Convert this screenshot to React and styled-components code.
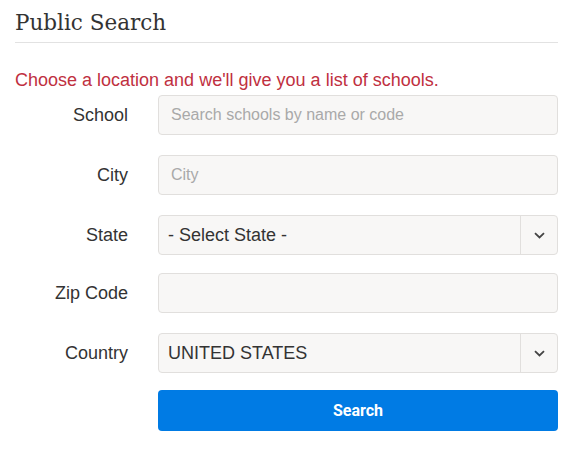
import React from "react";
import styled, { createGlobalStyle } from "styled-components";

const Global = createGlobalStyle`
  html, body { margin: 0; padding: 0; background: #fff; }
  body { font-family: "Liberation Sans", Arial, sans-serif; color: #333; }
  * { box-sizing: border-box; }
`;

const Page = styled.div`
  width: 583px;
  padding: 8px 25px 0 15px;
`;

const Title = styled.h1`
  margin: 0;
  font-family: "DejaVu Serif", "Liberation Serif", serif;
  font-weight: normal;
  font-size: 21.5px;
  line-height: 30px;
  color: #333;
  padding-bottom: 4px;
  border-bottom: 1px solid #e2e2e2;
`;

const Intro = styled.p`
  margin: 27px 0 0;
  font-size: 18px;
  line-height: 21px;
  color: #c0303f;
`;

const Form = styled.form`
  display: flex;
  flex-direction: column;
  margin-top: 4px;
`;

const Row = styled.div`
  display: grid;
  grid-template-columns: 113px 400px;
  column-gap: 30px;
  align-items: center;
  margin-bottom: ${(p) => p.$gap}px;
`;

const Label = styled.label`
  text-align: right;
  font-size: 18px;
  color: #333;
`;

const Input = styled.input`
  height: 40px;
  width: 100%;
  border: 1px solid #e1dfdd;
  border-radius: 4px;
  background: #f8f7f6;
  padding: 0 12px;
  font-family: "Liberation Sans", Arial, sans-serif;
  font-size: 16px;
  color: #333;
  outline: none;
  &::placeholder { color: #a9a9a9; }
`;

const SelectBox = styled.div`
  height: 40px;
  display: flex;
  border: 1px solid #e1dfdd;
  border-radius: 4px;
  background: #f8f7f6;
`;

const SelectValue = styled.div`
  flex: 1;
  display: flex;
  align-items: center;
  padding-left: 9px;
  font-size: 18px;
  color: #333;
`;

const Caret = styled.div`
  width: 37px;
  border-left: 1px solid #e1dfdd;
  display: flex;
  align-items: center;
  justify-content: center;
`;

const Button = styled.button`
  height: 41px;
  border: none;
  border-radius: 4px;
  background: #007be4;
  color: #fff;
  font-family: Roboto, "Liberation Sans", sans-serif;
  font-weight: 700;
  font-size: 16px;
  cursor: pointer;
`;

const Chevron = () => (
  <svg width="11" height="7" viewBox="0 0 11 7">
    <path d="M1 1.2 L5.5 5.5 L10 1.2" fill="none" stroke="#444" strokeWidth="1.8" />
  </svg>
);

const Select = ({ value }) => (
  <SelectBox>
    <SelectValue>{value}</SelectValue>
    <Caret>
      <Chevron />
    </Caret>
  </SelectBox>
);

export default function App() {
  return (
    <Page>
      <Global />
      <Title>Public Search</Title>
      <Intro>Choose a location and we'll give you a list of schools.</Intro>
      <Form onSubmit={(e) => e.preventDefault()}>
        <Row $gap={20}>
          <Label>School</Label>
          <Input placeholder="Search schools by name or code" />
        </Row>
        <Row $gap={20}>
          <Label>City</Label>
          <Input placeholder="City" />
        </Row>
        <Row $gap={18}>
          <Label>State</Label>
          <Select value="- Select State -" />
        </Row>
        <Row $gap={20}>
          <Label>Zip Code</Label>
          <Input />
        </Row>
        <Row $gap={17}>
          <Label>Country</Label>
          <Select value="UNITED STATES" />
        </Row>
        <Row $gap={0}>
          <span />
          <Button type="submit">Search</Button>
        </Row>
      </Form>
    </Page>
  );
}
